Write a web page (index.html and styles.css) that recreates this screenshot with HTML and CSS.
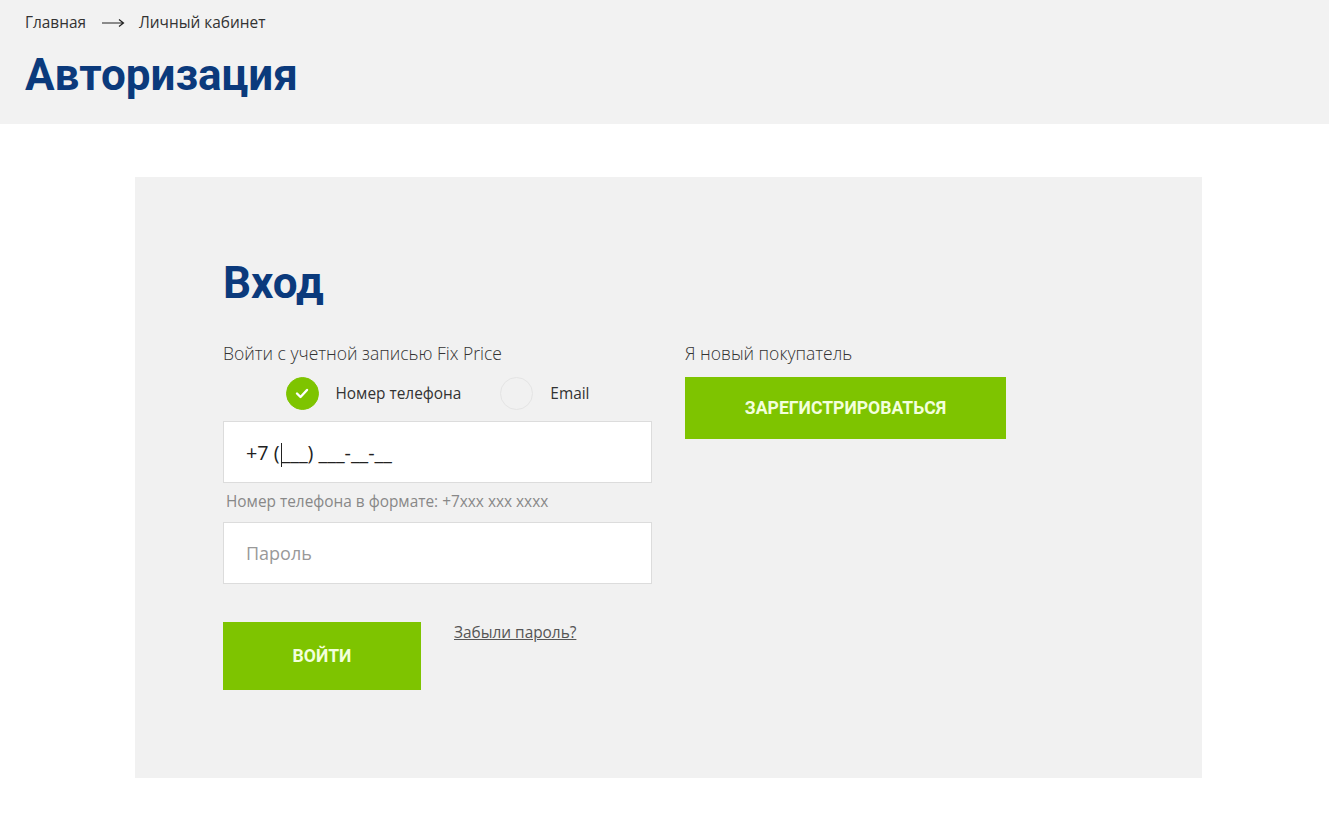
FILE: index.html
```
<!DOCTYPE html>
<html lang="ru">
<head>
<meta charset="utf-8">
<title>Авторизация</title>
<link rel="stylesheet" href="styles.css">
</head>
<body>
<header class="page-head">
  <nav class="crumbs">
    <span>Главная</span>
    <svg class="crumb-arrow" width="23" height="10" viewBox="0 0 23 10"><path d="M0 5H21M17 1.5L21.5 5L17 8.5" fill="none" stroke="#222" stroke-width="1.2"/></svg>
    <span>Личный кабинет</span>
  </nav>
  <h1 class="page-title">Авторизация</h1>
</header>
<main class="card">
  <h2 class="card-title">Вход</h2>
  <div class="cols">
    <section class="col-left">
      <p class="lead">Войти с учетной записью Fix Price</p>
      <div class="radios">
        <div class="radio">
          <span class="dot dot-on"><svg width="14" height="11" viewBox="0 0 14 11"><path d="M2 5.5L5.5 9L12 2" fill="none" stroke="#fff" stroke-width="2.4" stroke-linecap="round" stroke-linejoin="round"/></svg></span>
          <span class="radio-label">Номер телефона</span>
        </div>
        <div class="radio">
          <span class="dot"></span>
          <span class="radio-label">Email</span>
        </div>
      </div>
      <div class="field field-phone">+7 (<span class="caret"></span>___) ___-__-__</div>
      <p class="hint">Номер телефона в формате: +7xxx xxx xxxx</p>
      <div class="field field-empty">Пароль</div>
      <div class="actions">
        <button class="btn btn-login">ВОЙТИ</button>
        <a class="forgot" href="#">Забыли пароль?</a>
      </div>
    </section>
    <section class="col-right">
      <p class="lead">Я новый покупатель</p>
      <button class="btn btn-register">ЗАРЕГИСТРИРОВАТЬСЯ</button>
    </section>
  </div>
</main>
</body>
</html>
```
FILE: styles.css
```
* { box-sizing: border-box; }
html, body { margin: 0; padding: 0; background: #fff; }
body { font-family: "Open Sans", "Liberation Sans", sans-serif; color: #333; }

.page-head {
  background: #f2f2f2;
  height: 124px;
  padding: 13px 25px 0;
}
.crumbs {
  display: flex;
  align-items: center;
  font-size: 15.4px;
  line-height: 20px;
  color: #333;
}
.crumb-arrow { margin: 0 14px 0 16px; }
.page-title {
  margin: 16px 0 0;
  font-family: Roboto, "Liberation Sans", sans-serif;
  font-weight: 700;
  font-size: 44px;
  line-height: 52px;
  color: #0b3a7c;
}

.card {
  margin: 53px 0 0 135px;
  width: 1067px;
  height: 601px;
  background: #f1f1f1;
  padding: 80px 88px 0;
}
.card-title {
  margin: 0;
  font-family: Roboto, "Liberation Sans", sans-serif;
  font-weight: 700;
  font-size: 44px;
  line-height: 52px;
  color: #0b3a7c;
}
.cols {
  margin-top: 33px;
  display: flex;
  gap: 33px;
}
.col-left { width: 429px; }
.col-right { width: 321px; }
.lead {
  margin: 0;
  font-weight: 300;
  font-size: 17.5px;
  line-height: 22px;
  color: #333;
}
.radios {
  margin-top: 13px;
  display: flex;
  justify-content: center;
  gap: 39px;
}
.radio { display: flex; align-items: center; gap: 17px; }
.dot {
  width: 33px; height: 33px;
  border-radius: 50%;
  border: 1px solid #e4e4e4;
  display: flex; align-items: center; justify-content: center;
}
.dot-on { background: #7ec400; border-color: #7ec400; }
.radio-label { font-size: 15.4px; color: #333; }

.field {
  margin-top: 11px;
  height: 62px;
  background: #fff;
  border: 1px solid #dcdcdc;
  padding: 0 22px;
  display: flex;
  align-items: center;
  font-size: 19.8px;
  color: #222;
}
.field-empty { color: #999; margin-top: 10px; font-size: 18px; }
.caret {
  display: inline-block;
  width: 1px; height: 24px;
  background: #222;
  margin: 0 0 -5px 1px;
}
.hint {
  margin: 9px 0 0 3px;
  font-size: 15.4px;
  line-height: 20px;
  color: #888;
}
.actions {
  margin-top: 38px;
  display: flex;
  align-items: flex-start;
  gap: 33px;
}
.btn {
  border: 0;
  background: #7ec400;
  color: #f2ffdc;
  font-family: Roboto, "Liberation Sans", sans-serif;
  font-weight: 700;
  font-size: 17.6px;
  cursor: pointer;
}
.btn-login { width: 198px; height: 68px; }
.forgot {
  margin-top: 1px;
  font-size: 15.4px;
  line-height: 20px;
  color: #555;
  text-decoration: underline;
}
.btn-register {
  margin-top: 13px;
  width: 321px;
  height: 62px;
}
```
